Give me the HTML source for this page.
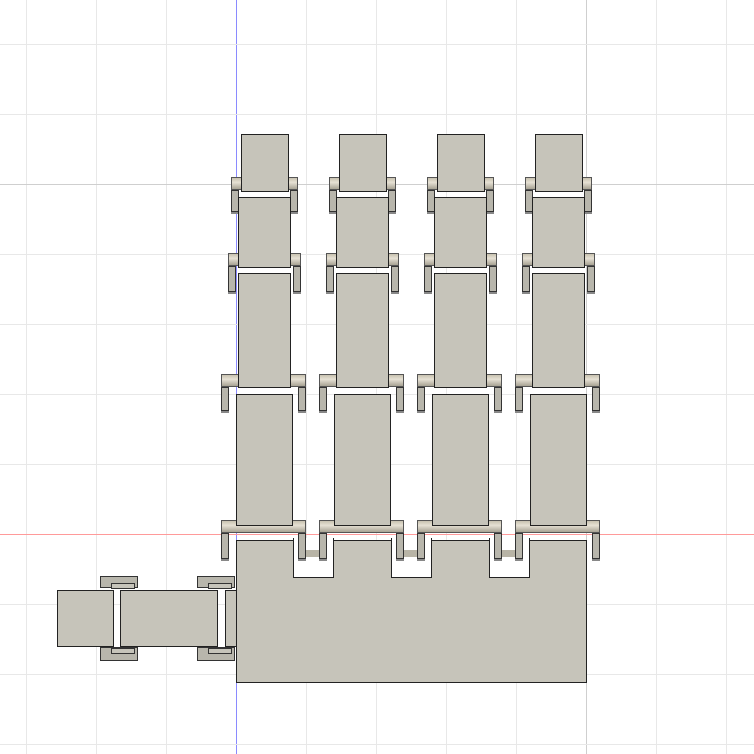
<!DOCTYPE html><html><head><style>
body{margin:0;width:754px;height:754px;background:#fff;position:relative;overflow:hidden}
div{position:absolute;box-sizing:border-box}
.s{background:#c6c4ba;border:1.5px solid #222}
.bar{background:linear-gradient(#c8c2b0,#e6e1d4 40%,#a8a394);border:1px solid #555}
.p{background:#b8b6ac;border:1.5px solid #333}
</style></head><body>
<script>
var b=document.body,h='';
function R(c,x,y,w,hh,st){h+='<div class="'+c+'" style="left:'+x+'px;top:'+y+'px;width:'+w+'px;height:'+hh+'px;'+(st||'')+'"></div>';}
for(var i=0;i<11;i++){var v=26+70*i;R('',v,0,1,754,'background:'+(v==236?'#8a8aff':v==586?'#cfcfcf':'#e8e8e8'));}
for(var i=0;i<11;i++){var v=44+70*i;R('',0,v,754,1,'background:'+(v==534?'#ff9a9a':v==184?'#cfcfcf':'#e8e8e8'));}
function J(x1,x2,y,hh){R('bar',x1,y,x2-x1,13);R('p',x1,y+13,8,hh);R('p',x2-8,y+13,8,hh);R('',x1,y+13+hh,8,2,'background:#888');R('',x2-8,y+13+hh,8,2,'background:#888');}
R('s',236,540,351,143);
[293,391,489].forEach(function(x){R('',x,538,41,40,'background:#fff;border:1.5px solid #222;border-top:none');R('',x+8,550,25,7,'background:#b8b4a6');});
for(var f=0;f<4;f++){var o=f*98;
J(231+o,298+o,177,22);J(228+o,301+o,253,26);J(221+o,306+o,374,24);J(221+o,306+o,520,26);
R('s',241+o,134,48,58);R('s',238+o,197,53,71);R('s',238+o,273,53,115);R('s',236+o,394,57,132);}
function TJ(x){R('p',x,576,38,12);R('p',x,647,38,14);R('',x+11,583,24,6,'background:#c6c4ba;border:1.5px solid #333');R('',x+11,648,24,6,'background:#c6c4ba;border:1.5px solid #333');}
TJ(100);TJ(197);
R('s',57,590,57,57);R('s',120,590,98,57);R('s',225,590,12,57);
b.insertAdjacentHTML('beforeend',h);
</script>
</body></html>
